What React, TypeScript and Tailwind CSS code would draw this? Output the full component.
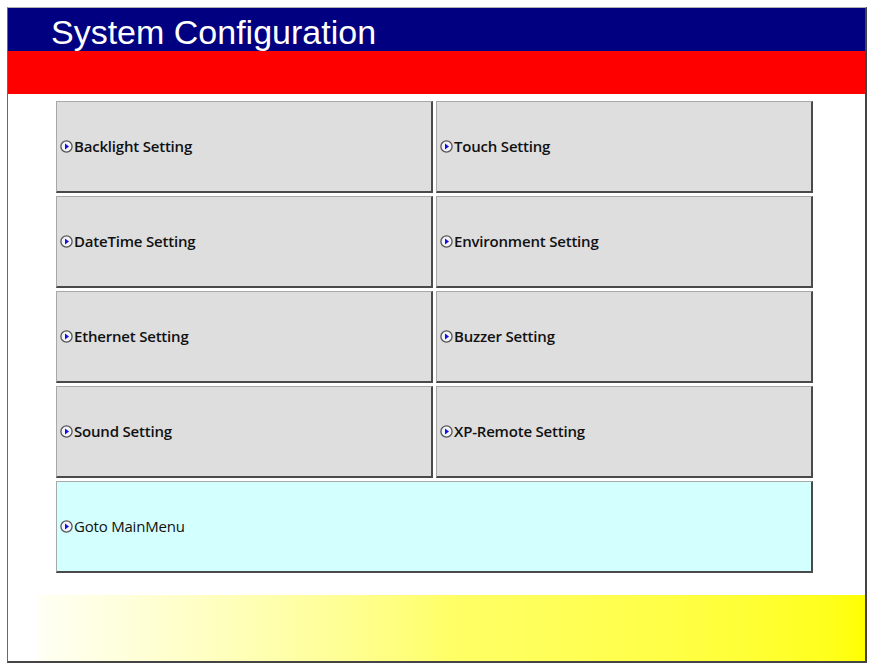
import React from 'react'

const items = [
  'Backlight Setting',
  'Touch Setting',
  'DateTime Setting',
  'Environment Setting',
  'Ethernet Setting',
  'Buzzer Setting',
  'Sound Setting',
  'XP-Remote Setting',
]

function Bullet() {
  return (
    <svg width="13" height="13" viewBox="0 0 13 13" className="shrink-0">
      <circle cx="6.5" cy="6.5" r="5.6" fill="#f2f2f8" stroke="#555" strokeWidth="1.3" />
      <path d="M5 3.6 L9 6.5 L5 9.4 Z" fill="#1010e0" />
    </svg>
  )
}

function MenuButton({ label, cyan }: { label: string; cyan?: boolean }) {
  return (
    <div
      className={`flex h-[92px] items-center gap-[1px] border-t border-l border-[#a8a8a8] border-r-2 border-b-2 border-r-[#4a4a4a] border-b-[#4a4a4a] pl-[3px] ${
        cyan ? 'col-span-2 bg-[#d4ffff]' : 'bg-[#dedede]'
      }`}
    >
      <Bullet />
      <span
        className={`text-[15px] text-[#111] [font-family:'Open_Sans',sans-serif] tracking-[-0.2px] ${
          cyan ? 'font-medium' : 'font-semibold'
        }`}
      >
        {label}
      </span>
    </div>
  )
}

export default function App() {
  return (
    <div className="h-[667px] w-[874px] bg-white pl-[7px] pt-[7px]">
      <div className="flex h-[656px] w-[860px] flex-col border border-[#6a6a6a] border-t-[#b0b0b0] border-r-2 border-b-2 border-r-[#444] border-b-[#444]">
        <div className="flex h-[43px] items-center bg-[#000080] pl-[43px] pt-[5px]">
          <h1 className="text-[34px] leading-none text-white [font-family:'Liberation_Sans',sans-serif]">
            System Configuration
          </h1>
        </div>
        <div className="h-[43px] bg-[#ff0000]" />
        <div className="grid grid-cols-2 gap-[3px] pl-[48px] pr-[52px] pt-[7px]">
          {items.map((label) => (
            <MenuButton key={label} label={label} />
          ))}
          <MenuButton label="Goto MainMenu" cyan />
        </div>
        <div className="mt-auto ml-[29px] h-[66px] bg-gradient-to-r from-[#fffff4] via-[#ffff66] to-[#ffff00]" />
      </div>
    </div>
  )
}
